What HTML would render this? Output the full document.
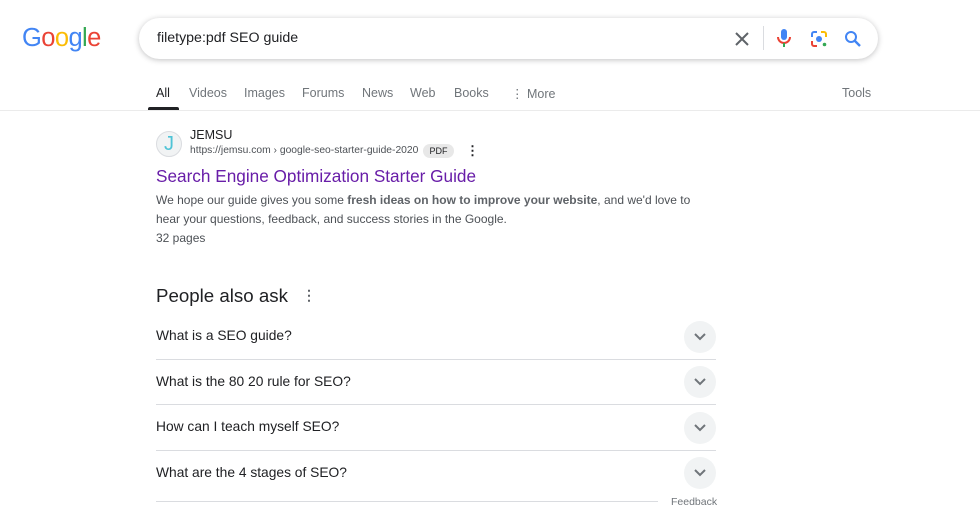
<!DOCTYPE html>
<html><head><meta charset="utf-8"><style>
*{margin:0;padding:0;box-sizing:border-box}
body{width:980px;height:529px;background:#fff;font-family:"Liberation Sans",Arial,sans-serif;position:relative;overflow:hidden;color:#202124}
.a{position:absolute;white-space:nowrap}
.logo{left:22px;top:24px;font-size:25.5px;letter-spacing:-0.6px}
.box{left:139px;top:18px;width:739px;height:41px;border-radius:21px;box-shadow:0 1px 6px rgba(32,33,36,.28);background:#fff}
.tab{top:86px;font-size:12.5px;color:#70757a}
.q{left:156px;font-size:13.8px;color:#202124}
.hr{left:156px;width:560px;height:1px;background:#dadce0}
.chev{left:684px;width:32px;height:32px;border-radius:50%;background:#f1f3f4}
.chev svg{position:absolute;left:10px;top:11px}
</style></head><body>
<div class="a logo"><span style="color:#4285f4">G</span><span style="color:#ea4335">o</span><span style="color:#fbbc05">o</span><span style="color:#4285f4">g</span><span style="color:#34a853">l</span><span style="color:#ea4335">e</span></div>
<div class="a box"></div>
<div class="a" style="left:157px;top:30px;font-size:14.2px;color:#202124">filetype:pdf SEO guide</div>
<svg class="a" style="left:735px;top:32px" width="14" height="14"><path d="M1 1L13 13M13 1L1 13" stroke="#5f6368" stroke-width="2"/></svg>
<div class="a" style="left:763px;top:26px;width:1px;height:24px;background:#dadce0"></div>
<svg class="a" style="left:776px;top:28px" width="16" height="22"><rect x="5" y="1" width="6" height="11" rx="3" fill="#4285f4"/><path d="M2 9a6 6 0 0 0 12 0" stroke="#ea4335" stroke-width="2" fill="none"/><path d="M8 15v4" stroke="#34a853" stroke-width="2"/></svg>
<svg class="a" style="left:810px;top:30px" width="18" height="18"><path d="M2 7V4a2 2 0 0 1 2-2h3" stroke="#4285f4" stroke-width="2" fill="none"/><path d="M11 2h3a2 2 0 0 1 2 2v3" stroke="#fbbc05" stroke-width="2" fill="none"/><path d="M2 11v3a2 2 0 0 0 2 2h3" stroke="#ea4335" stroke-width="2" fill="none"/><circle cx="9" cy="9" r="3" fill="#4285f4"/><circle cx="14.5" cy="14.5" r="1.8" fill="#34a853"/></svg>
<svg class="a" style="left:844px;top:30px" width="18" height="18"><circle cx="7" cy="7" r="5" stroke="#4285f4" stroke-width="2" fill="none"/><path d="M10.5 10.5L16 16" stroke="#4285f4" stroke-width="2.4"/></svg>
<div class="a tab" style="left:156px;color:#202124">All</div>
<div class="a" style="left:148px;top:107px;width:31px;height:3px;background:#202124;border-radius:2px 2px 0 0"></div>
<div class="a tab" style="left:189px">Videos</div>
<div class="a tab" style="left:244px">Images</div>
<div class="a tab" style="left:302px">Forums</div>
<div class="a tab" style="left:362px">News</div>
<div class="a tab" style="left:410px">Web</div>
<div class="a tab" style="left:454px">Books</div>
<div class="a tab" style="left:511px">⋮ More</div>
<div class="a tab" style="left:842px">Tools</div>
<div class="a" style="left:0;top:110px;width:980px;height:1px;background:#ebebeb"></div>
<div class="a" style="left:156px;top:131px;width:26px;height:26px;border-radius:50%;background:#f1f3f4;border:1px solid #dadce0;color:#4ec3d6;font-size:20px;text-align:center;line-height:24px">J</div>
<div class="a" style="left:190px;top:128px;font-size:12.5px;color:#202124">JEMSU</div>
<div class="a" style="left:190px;top:145px;font-size:10.3px;color:#4d5156">https://jemsu.com › google-seo-starter-guide-2020</div>
<div class="a" style="left:423px;top:144px;width:31px;height:14px;border-radius:7px;background:#e8e8e8;font-size:9px;color:#202124;text-align:center;line-height:14px">PDF</div>
<div class="a" style="left:466px;top:143px;font-size:13px;font-weight:bold;color:#202124">⋮</div>
<div class="a" style="left:156px;top:166px;font-size:17.2px;color:#681da8">Search Engine Optimization Starter Guide</div>
<div class="a" style="left:156px;top:191px;font-size:12px;line-height:19px;color:#4d5156">We hope our guide gives you some <b style="color:#5f6368">fresh ideas on how to improve your website</b>, and we'd love to<br>hear your questions, feedback, and success stories in the Google.<br>32 pages</div>
<div class="a" style="left:156px;top:285px;font-size:18.7px;color:#202124">People also ask</div>
<div class="a" style="left:302px;top:287px;font-size:14px;font-weight:bold;color:#5f6368">⋮</div>
<div class="a q" style="top:328px">What is a SEO guide?</div>
<div class="a chev" style="top:321px"><svg width="12" height="10"><path d="M1 2l5 5 5-5" stroke="#70757a" stroke-width="2" fill="none"/></svg></div>
<div class="a hr" style="top:359px"></div>
<div class="a q" style="top:374px">What is the 80 20 rule for SEO?</div>
<div class="a chev" style="top:366px"><svg width="12" height="10"><path d="M1 2l5 5 5-5" stroke="#70757a" stroke-width="2" fill="none"/></svg></div>
<div class="a hr" style="top:404px"></div>
<div class="a q" style="top:419px">How can I teach myself SEO?</div>
<div class="a chev" style="top:412px"><svg width="12" height="10"><path d="M1 2l5 5 5-5" stroke="#70757a" stroke-width="2" fill="none"/></svg></div>
<div class="a hr" style="top:450px"></div>
<div class="a q" style="top:465px">What are the 4 stages of SEO?</div>
<div class="a chev" style="top:457px"><svg width="12" height="10"><path d="M1 2l5 5 5-5" stroke="#70757a" stroke-width="2" fill="none"/></svg></div>
<div class="a hr" style="top:501px;width:502px"></div>
<div class="a" style="left:671px;top:496px;font-size:10.5px;color:#70757a">Feedback</div>
</body></html>
